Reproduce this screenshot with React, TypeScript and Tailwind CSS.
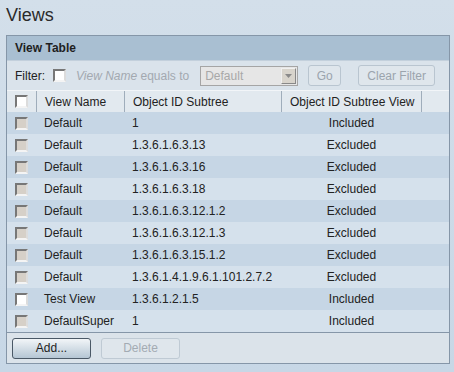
import React from "react";

type Row = { name: string; oid: string; view: string; enabled?: boolean };

const rows: Row[] = [
  { name: "Default", oid: "1", view: "Included" },
  { name: "Default", oid: "1.3.6.1.6.3.13", view: "Excluded" },
  { name: "Default", oid: "1.3.6.1.6.3.16", view: "Excluded" },
  { name: "Default", oid: "1.3.6.1.6.3.18", view: "Excluded" },
  { name: "Default", oid: "1.3.6.1.6.3.12.1.2", view: "Excluded" },
  { name: "Default", oid: "1.3.6.1.6.3.12.1.3", view: "Excluded" },
  { name: "Default", oid: "1.3.6.1.6.3.15.1.2", view: "Excluded" },
  { name: "Default", oid: "1.3.6.1.4.1.9.6.1.101.2.7.2", view: "Excluded" },
  { name: "Test View", oid: "1.3.6.1.2.1.5", view: "Included", enabled: true },
  { name: "DefaultSuper", oid: "1", view: "Included" },
];

const cols = "grid grid-cols-[29px_88px_157px_141px_1fr]";

function Check({ disabled }: { disabled?: boolean }) {
  return (
    <div
      className={
        "h-[13px] w-[13px] border-2 border-t-[#777] border-l-[#777] border-r-[#dcdcdc] border-b-[#f4f4f4] " +
        (disabled ? "bg-[#d6d0c8]" : "bg-white")
      }
    />
  );
}

export default function App() {
  return (
    <div
      className="h-[372px] w-[454px] overflow-hidden bg-gradient-to-b from-[#d3dfea] to-[#c7d7e6] text-[12px] text-[#222]"
      style={{ fontFamily: '"Liberation Sans", Arial, sans-serif' }}
    >
      <h1 className="pl-[6px] pt-[4px] text-[18px] leading-[22px] text-[#2a2a2a]">Views</h1>

      <div className="mx-[6px] mt-[9px] w-[444px] border border-[#8596a8] bg-[#dbe3ea]">
        {/* title bar */}
        <div className="flex h-[24px] items-center bg-[#a9bfd2] pl-[8px] font-bold text-[#1e1e1e]">
          View Table
        </div>

        {/* filter row */}
        <div className="flex h-[30px] items-center border-t border-[#c3d0dc] bg-[#dae3eb] pl-[8px]">
          <span>Filter:</span>
          <div className="ml-[8px]">
            <Check />
          </div>
          <span className="ml-[10px] text-[#a3a9b0]">
            <i>View Name</i> equals to
          </span>
          <div className="ml-[11px] flex h-[20px] w-[98px] items-center border border-[#a5a5a5] bg-[#e6e6e6]">
            <span className="flex-1 pl-[4px] text-[#a8a8a8]">Default</span>
            <div className="mr-[1px] flex h-[16px] w-[15px] items-center justify-center border border-t-[#f0f0f0] border-l-[#f0f0f0] border-r-[#888] border-b-[#888] bg-[#d8d4cc]">
              <svg width="7" height="4" viewBox="0 0 7 4">
                <path d="M0 0h7L3.5 4z" fill="#8a8a8a" />
              </svg>
            </div>
          </div>
          <button className="ml-[10px] h-[21px] w-[33px] rounded-[3px] border border-[#b9c5d0] bg-[#dfe6ec] text-[#9ba4ad]">
            Go
          </button>
          <button className="ml-[17px] h-[21px] w-[77px] rounded-[3px] border border-[#b9c5d0] bg-[#dfe6ec] text-[#9ba4ad]">
            Clear Filter
          </button>
        </div>

        {/* header */}
        <div className={cols + " h-[22px] border-t border-[#f2f5f8] bg-[#e2e9ef]"}>
          <div className="flex items-center pl-[8px]">
            <Check />
          </div>
          <div className="flex items-center border-l border-[#9fadbb] pl-[8px]">View Name</div>
          <div className="flex items-center border-l border-[#9fadbb] pl-[8px]">Object ID Subtree</div>
          <div className="flex items-center border-l border-r border-[#9fadbb] pl-[8px]">Object ID Subtree View</div>
          <div />
        </div>

        {/* rows */}
        {rows.map((r, i) => (
          <div
            key={i}
            className={cols + " h-[22px] " + (i % 2 === 0 ? "bg-[#c6d6e5]" : "bg-[#d5e1ec]")}
          >
            <div className="flex items-center pl-[8px]">
              <Check disabled={!r.enabled} />
            </div>
            <div className="flex items-center pl-[8px] whitespace-nowrap">{r.name}</div>
            <div className="flex items-center pl-[8px] whitespace-nowrap">{r.oid}</div>
            <div className="flex items-center justify-center">{r.view}</div>
            <div />
          </div>
        ))}

        {/* buttons */}
        <div className="flex h-[31px] items-center gap-[10px] border-t border-[#8596a8] bg-[#dbe3ea] pl-[5px]">
          <button className="h-[21px] w-[79px] rounded-[3px] border border-[#4a5866] bg-gradient-to-b from-[#f2f5f8] to-[#b5c6d4] text-[#1e1e1e]">
            Add...
          </button>
          <button className="h-[21px] w-[79px] rounded-[3px] border border-[#bfcad4] bg-[#dfe6ec] text-[#a3abb3]">
            Delete
          </button>
        </div>
      </div>
    </div>
  );
}
